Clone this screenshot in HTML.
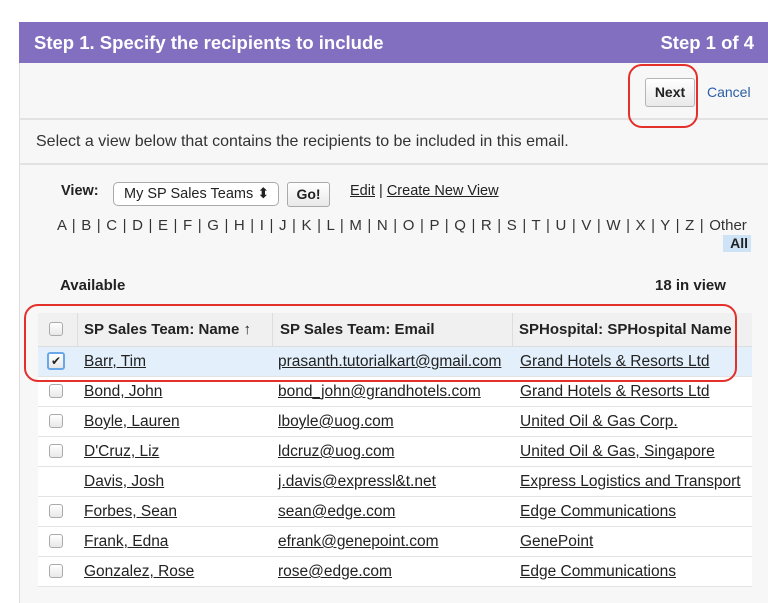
<!DOCTYPE html>
<html><head><style>
*{margin:0;padding:0;box-sizing:border-box}
body{width:768px;height:594px;background:#fff;font-family:"Liberation Sans",sans-serif;position:relative;overflow:hidden;color:#222}
.abs{position:absolute}
.hdr{left:19px;top:22px;width:749px;height:41px;background:#826fbf;color:#fff;font-weight:bold;font-size:18.5px}
.panel{left:19px;top:63px;width:749px;height:540px;background:#f7f7f7;border-left:1px solid #ddd}
.sep{left:19px;width:749px;height:2px;background:#e2e2e2}
a{color:#222;text-decoration:underline}
.row{position:absolute;left:38px;width:714px;height:30px;background:#fff;border-bottom:1px solid #e3e3e3;font-size:15.5px}
.row span{position:absolute;top:6px;white-space:nowrap}
.cb{position:absolute;left:11px;top:7px;width:14px;height:14px;border:1px solid #aaa;border-radius:3px;background:linear-gradient(#fff,#e8e8e8)}
.c1{left:46px}.c2{left:240px}.c3{left:482px}
</style></head><body>
<div class="abs hdr"><span class="abs" style="left:15px;top:10px">Step 1. Specify the recipients to include</span><span class="abs" style="right:14px;top:10px">Step 1 of 4</span></div>
<div class="abs panel"></div>
<div class="abs sep" style="top:118px"></div>
<div class="abs sep" style="top:163px"></div>
<div class="abs" style="left:645px;top:78px;width:50px;height:29px;border:1px solid #b5b5b5;border-radius:3px;background:linear-gradient(#fff,#e9e9e9);font-weight:bold;font-size:14px;text-align:center;line-height:27px">Next</div>
<div class="abs" style="left:707px;top:84px;font-size:14px;color:#2a5ea6">Cancel</div>
<div class="abs" style="left:628px;top:64px;width:70px;height:64px;border:2px solid #e3302a;border-radius:14px"></div>
<div class="abs" style="left:36px;top:133px;font-size:16px;color:#333">Select a view below that contains the recipients to be included in this email.</div>
<div class="abs" style="left:61px;top:183px;font-size:14.5px;font-weight:bold">View:</div>
<div class="abs" style="left:113px;top:182px;width:166px;height:24px;border:1px solid #aaa;border-radius:5px;background:#fff;font-size:14.5px;padding:3px 0 0 10px">My SP Sales Teams ⬍</div>
<div class="abs" style="left:287px;top:182px;width:43px;height:25px;border:1px solid #aaa;border-radius:3px;background:linear-gradient(#fff,#e9e9e9);font-size:14px;font-weight:bold;text-align:center;line-height:23px">Go!</div>
<div class="abs" style="left:350px;top:183px;font-size:14.5px"><a>Edit</a> | <a>Create New View</a></div>
<div class="abs" style="left:57px;top:217px;font-size:15px;color:#333;word-spacing:1.4px;white-space:nowrap">A | B | C | D | E | F | G | H | I | J | K | L | M | N | O | P | Q | R | S | T | U | V | W | X | Y | Z | Other</div>
<div class="abs" style="left:723px;top:235px;width:28px;height:17px;background:#cfe3f7;font-size:14px;font-weight:bold;text-align:right;padding-right:3px">All</div>
<div class="abs" style="left:60px;top:277px;font-size:15px;font-weight:bold">Available</div>
<div class="abs" style="left:655px;top:277px;font-size:15px;font-weight:bold">18 in view</div>
<div class="row" style="top:313px;height:34px;background:#f0f0f0;font-weight:bold;font-size:15px;border-bottom:1px solid #ddd">
<div class="cb" style="top:9px"></div>
<div class="abs" style="left:39px;top:0;width:1px;height:34px;background:#ddd"></div>
<div class="abs" style="left:234px;top:0;width:1px;height:34px;background:#ddd"></div>
<div class="abs" style="left:474px;top:0;width:1px;height:34px;background:#ddd"></div>
<span style="left:46px;top:8px">SP Sales Team: Name ↑</span><span style="left:242px;top:8px">SP Sales Team: Email</span><span style="left:481px;top:8px">SPHospital: SPHospital Name</span></div>
<div class="row" style="top:347px;background:#e3f0fb"><div class="cb" style="border:2px solid #6aa7e8;width:18px;height:18px;left:9px;top:5px;font-size:12px;line-height:14px;text-align:center">✔</div><span class="c1"><a>Barr, Tim</a></span><span class="c2"><a>prasanth.tutorialkart@gmail.com</a></span><span class="c3"><a>Grand Hotels &amp; Resorts Ltd</a></span></div>
<div class="row" style="top:377px"><div class="cb"></div><span class="c1"><a>Bond, John</a></span><span class="c2"><a>bond_john@grandhotels.com</a></span><span class="c3"><a>Grand Hotels &amp; Resorts Ltd</a></span></div>
<div class="row" style="top:407px"><div class="cb"></div><span class="c1"><a>Boyle, Lauren</a></span><span class="c2"><a>lboyle@uog.com</a></span><span class="c3"><a>United Oil &amp; Gas Corp.</a></span></div>
<div class="row" style="top:437px"><div class="cb"></div><span class="c1"><a>D'Cruz, Liz</a></span><span class="c2"><a>ldcruz@uog.com</a></span><span class="c3"><a>United Oil &amp; Gas, Singapore</a></span></div>
<div class="row" style="top:467px"><span class="c1"><a>Davis, Josh</a></span><span class="c2"><a>j.davis@expressl&amp;t.net</a></span><span class="c3"><a>Express Logistics and Transport</a></span></div>
<div class="row" style="top:497px"><div class="cb"></div><span class="c1"><a>Forbes, Sean</a></span><span class="c2"><a>sean@edge.com</a></span><span class="c3"><a>Edge Communications</a></span></div>
<div class="row" style="top:527px"><div class="cb"></div><span class="c1"><a>Frank, Edna</a></span><span class="c2"><a>efrank@genepoint.com</a></span><span class="c3"><a>GenePoint</a></span></div>
<div class="row" style="top:557px"><div class="cb"></div><span class="c1"><a>Gonzalez, Rose</a></span><span class="c2"><a>rose@edge.com</a></span><span class="c3"><a>Edge Communications</a></span></div>
<div class="abs" style="left:24px;top:304px;width:713px;height:78px;border:2px solid #e3302a;border-radius:14px"></div>
</body></html>
